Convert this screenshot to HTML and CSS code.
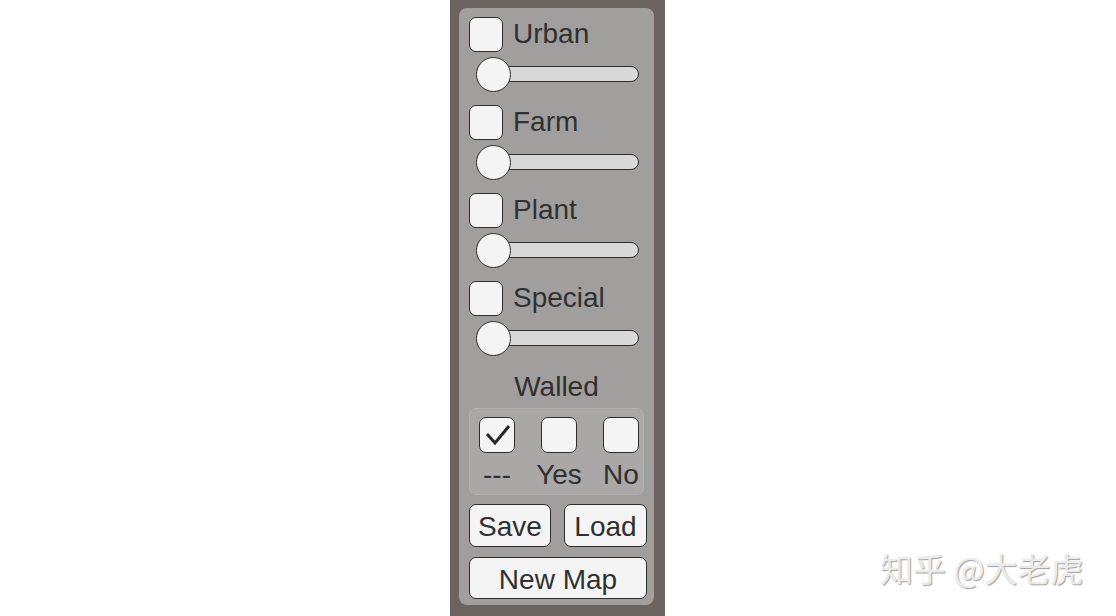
FILE: index.html
```html
<!DOCTYPE html>
<html>
<head>
<meta charset="UTF-8">
<title>Map Editor</title>
<link rel="stylesheet" href="styles.css">
</head>
<body>
<div class="frame">
	<div class="panel">
		<div class="layer">
			<label class="toggle"><span class="box"></span><span class="name">Urban</span></label>
			<div class="slider"><div class="track"></div><div class="thumb"></div></div>
		</div>
		<div class="layer">
			<label class="toggle"><span class="box"></span><span class="name">Farm</span></label>
			<div class="slider"><div class="track"></div><div class="thumb"></div></div>
		</div>
		<div class="layer">
			<label class="toggle"><span class="box"></span><span class="name">Plant</span></label>
			<div class="slider"><div class="track"></div><div class="thumb"></div></div>
		</div>
		<div class="layer">
			<label class="toggle"><span class="box"></span><span class="name">Special</span></label>
			<div class="slider"><div class="track"></div><div class="thumb"></div></div>
		</div>

		<div class="heading">Walled</div>
		<div class="group">
			<span class="box"><svg width="36" height="36" viewBox="0 0 36 36"><path d="M8 17 L16 26 L30 9" fill="none" stroke="#262626" stroke-width="3"/></svg></span>
			<span class="box"></span>
			<span class="box"></span>
			<span class="opt">---</span>
			<span class="opt">Yes</span>
			<span class="opt">No</span>
		</div>

		<div class="buttons">
			<button class="btn">Save</button>
			<button class="btn">Load</button>
			<button class="btn wide">New Map</button>
		</div>
	</div>
</div>
<div class="mark">知乎 @大老虎</div>
</body>
</html>
```

FILE: styles.css
```css
body {
	margin: 0;
	background: #ffffff;
	font-family: "Liberation Sans", Arial, sans-serif;
	color: #303030;
	overflow: hidden;
}

.frame {
	width: 215px;
	height: 616px;
	margin-left: 450px;
	box-sizing: border-box;
	padding: 8px 11px 0 9px;
	background: #6b635f;
}

.panel {
	width: 195px;
	height: 597px;
	box-sizing: border-box;
	padding: 9px 10px 0 10px;
	background: #a19f9d;
	border-radius: 8px;
}

.layer {
	margin-bottom: 13px;
}

.toggle {
	display: flex;
	align-items: center;
	height: 35px;
}

.box {
	display: block;
	width: 34px;
	height: 35px;
	box-sizing: border-box;
	background: #f4f4f4;
	border: 1px solid #2e2e2e;
	border-radius: 7px;
}

.name {
	margin: 0 0 2px 10px;
	font-size: 28px;
	line-height: 32px;
}

.slider {
	position: relative;
	height: 35px;
	width: 163px;
	margin: 5px 0 0 7px;
}

.track {
	position: absolute;
	left: 12px;
	right: 0;
	top: 9px;
	height: 16px;
	box-sizing: border-box;
	background: #d9d9d9;
	border: 1px solid #2e2e2e;
	border-radius: 8px;
}

.thumb {
	position: absolute;
	left: 0;
	top: 0;
	width: 35px;
	height: 35px;
	box-sizing: border-box;
	background: #f4f4f4;
	border: 1px solid #2e2e2e;
	border-radius: 50%;
}

.heading {
	margin-top: 15px;
	text-align: center;
	font-size: 28px;
	line-height: 32px;
	padding-bottom: 1px;
}

.group {
	margin-top: 4px;
	height: 87px;
	box-sizing: border-box;
	padding: 8px 0 0 9px;
	display: grid;
	grid-template-columns: 36px 36px 36px;
	grid-template-rows: 36px 40px;
	column-gap: 26px;
	justify-items: center;
	background: #aaa8a6;
	border: 1px solid #b3b1af;
	border-radius: 7px;
}

.group .box {
	width: 36px;
	height: 36px;
}

.group .box svg {
	display: block;
	margin: -1px;
}

.opt {
	font-size: 28px;
	line-height: 32px;
	margin-top: 6px;
	white-space: nowrap;
}

.buttons {
	margin-top: 9px;
	display: grid;
	grid-template-columns: 82px 83px;
	grid-template-rows: 43px 42px;
	column-gap: 13px;
	row-gap: 10px;
}

.btn {
	font-family: "Liberation Sans", Arial, sans-serif;
	font-size: 28px;
	color: #303030;
	padding: 3px 0 0 0;
	background: #f4f4f4;
	border: 1px solid #2e2e2e;
	border-radius: 7px;
}

.wide {
	grid-column: 1 / 3;
}

.mark {
	position: absolute;
	left: 880px;
	top: 546px;
	font-family: "Noto Sans CJK SC", sans-serif;
	font-size: 33px;
	line-height: 44px;
	color: #ebebeb;
	text-shadow: 1px 1px 1px #a0a0a0;
}
```
